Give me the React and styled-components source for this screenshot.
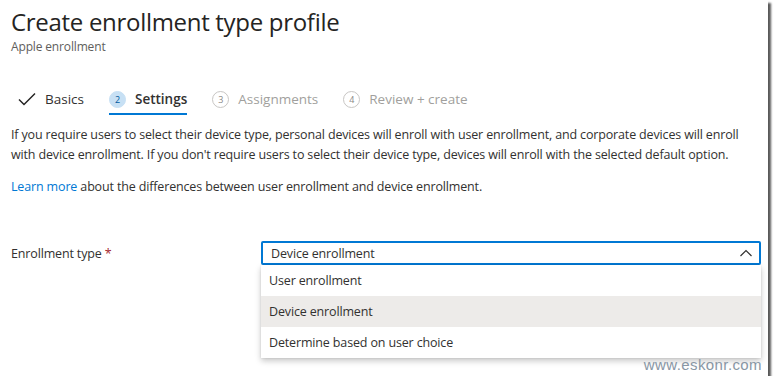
import React from 'react';
import styled, { createGlobalStyle } from 'styled-components';

const GlobalStyle = createGlobalStyle`
    body {
        margin: 0;
        background: #fff;
        font-family: 'Open Sans', 'Noto Sans', sans-serif;
        color: #323130;
    }
`;

const Frame = styled.div`
    position: relative;
    width: 768px;
    height: 376px;
    background: #fff;
    box-shadow: 3px 3px 2px rgba(0, 0, 0, 0.65);
    overflow: hidden;
`;

const Page = styled.div`
    display: flex;
    flex-direction: column;
    padding: 6px 0 0 11px;
`;

const Title = styled.h1`
    margin: 0;
    font-size: 24px;
    font-weight: 500;
    letter-spacing: -0.3px;
    line-height: 32px;
    color: #252423;
`;

const Subtitle = styled.div`
    font-size: 12px;
    line-height: 16px;
    letter-spacing: -0.15px;
    color: #605e5c;
    margin-top: 1px;
`;

const Steps = styled.div`
    display: flex;
    align-items: center;
    margin-top: 30px;
    height: 28px;
`;

const Step = styled.div`
    display: flex;
    align-items: center;
    gap: 9px;
    height: 28px;
    margin-right: 25px;
    padding-left: ${(p) => (p.$state === 'done' ? 7 : 0)}px;
    font-size: 13.5px;
    letter-spacing: 0;
    color: ${(p) => (p.$state === 'todo' ? '#a19f9d' : '#323130')};
    font-weight: ${(p) => (p.$state === 'active' ? 600 : 400)};
    border-bottom: 2px solid ${(p) => (p.$state === 'active' ? '#0078d4' : 'transparent')};
    padding-top: 2px;
`;

const Badge = styled.span`
    display: inline-flex;
    align-items: center;
    justify-content: center;
    width: 17px;
    height: 17px;
    border-radius: 50%;
    font-size: 9px;
    font-weight: 400;
    box-sizing: border-box;
    background: ${(p) => (p.$active ? '#c7e0f4' : '#fff')};
    border: 1px solid ${(p) => (p.$active ? '#c7e0f4' : '#c8c6c4')};
    color: ${(p) => (p.$active ? '#005a9e' : '#8a8886')};
`;

const Text = styled.p`
    margin: 0;
    font-size: 12.5px;
    letter-spacing: -0.15px;
    line-height: 20px;
    width: 755px;
    margin-top: ${(p) => p.$top || 0}px;
`;

const Link = styled.a`
    color: #0078d4;
    text-decoration: none;
`;

const FieldRow = styled.div`
    display: flex;
    align-items: center;
    margin-top: 44px;
`;

const Label = styled.label`
    width: 250px;
    font-size: 12.5px;
    letter-spacing: -0.15px;
    color: #323130;
    span {
        color: #a4262c;
    }
`;

const SelectWrap = styled.div`
    position: relative;
    width: 500px;
`;

const SelectBox = styled.div`
    display: flex;
    align-items: center;
    justify-content: space-between;
    height: 24px;
    box-sizing: border-box;
    border: 2px solid #0078d4;
    border-radius: 2px;
    padding: 0 7px 0 8px;
    font-size: 12.5px;
    letter-spacing: -0.15px;
`;

const Menu = styled.ul`
    position: absolute;
    top: 24px;
    left: 0;
    right: 0;
    margin: 0;
    padding: 0;
    list-style: none;
    background: #fff;
    box-shadow: 0 3px 6px rgba(0, 0, 0, 0.22), 0 0 2px rgba(0, 0, 0, 0.1);
`;

const Option = styled.li`
    height: 31px;
    display: flex;
    align-items: center;
    padding-left: 8px;
    font-size: 12.5px;
    letter-spacing: -0.15px;
    background: ${(p) => (p.$selected ? '#edebe9' : '#fff')};
`;

const Watermark = styled.div`
    position: absolute;
    right: 6px;
    bottom: 3px;
    font-family: 'Liberation Sans', Arial, sans-serif;
    font-size: 15px;
    color: #8896a4;
    letter-spacing: 0.4px;
`;

const Check = () => (
    <svg width="18" height="14" viewBox="0 0 18 14">
        <path d="M1 7.5 L6 12.5 L17 1.5" fill="none" stroke="#252423" strokeWidth="1.5" />
    </svg>
);

const ChevronUp = () => (
    <svg width="12" height="8" viewBox="0 0 12 8">
        <path d="M0.5 7 L6 1.5 L11.5 7" fill="none" stroke="#323130" strokeWidth="1.2" />
    </svg>
);

const App = () => (
    <>
        <GlobalStyle />
        <Frame>
            <Page>
                <Title>Create enrollment type profile</Title>
                <Subtitle>Apple enrollment</Subtitle>
                <Steps>
                    <Step $state="done">
                        <Check />
                        Basics
                    </Step>
                    <Step $state="active">
                        <Badge $active>2</Badge>
                        Settings
                    </Step>
                    <Step $state="todo">
                        <Badge>3</Badge>
                        Assignments
                    </Step>
                    <Step $state="todo">
                        <Badge>4</Badge>
                        Review + create
                    </Step>
                </Steps>
                <Text $top={12}>
                    If you require users to select their device type, personal devices will enroll with user
                    enrollment, and corporate devices will enroll with device enrollment. If you don't require
                    users to select their device type, devices will enroll with the selected default option.
                </Text>
                <Text $top={12}>
                    <Link href="#">Learn more</Link> about the differences between user enrollment and device
                    enrollment.
                </Text>
                <FieldRow>
                    <Label>
                        Enrollment type <span>*</span>
                    </Label>
                    <SelectWrap>
                        <SelectBox>
                            Device enrollment
                            <ChevronUp />
                        </SelectBox>
                        <Menu>
                            <Option>User enrollment</Option>
                            <Option $selected>Device enrollment</Option>
                            <Option>Determine based on user choice</Option>
                        </Menu>
                    </SelectWrap>
                </FieldRow>
            </Page>
            <Watermark>www.eskonr.com</Watermark>
        </Frame>
    </>
);

export default App;
